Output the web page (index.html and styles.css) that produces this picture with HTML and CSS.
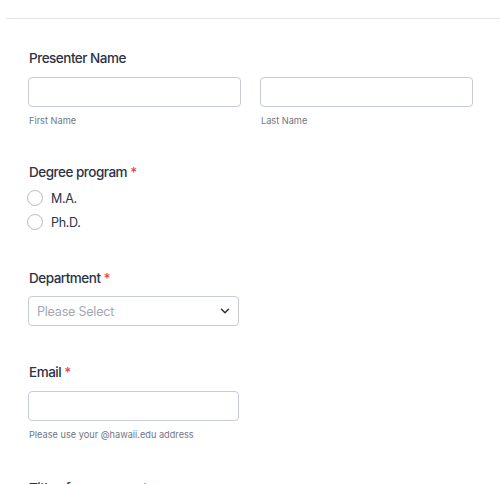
FILE: index.html
```html
<!DOCTYPE html>
<html lang="en">
<head>
    <meta charset="UTF-8">
    <meta name="viewport" content="width=device-width, initial-scale=1.0">
    <title>Presenter Registration</title>
    <link rel="stylesheet" href="styles.css">
</head>
<body>
    <div class="top-line"></div>
    <form class="form">
        <div class="form-line">
            <label class="form-label">Presenter Name</label>
            <div class="name-row">
                <div class="name-field">
                    <input type="text" class="form-input">
                    <span class="sublabel">First Name</span>
                </div>
                <div class="name-field">
                    <input type="text" class="form-input">
                    <span class="sublabel">Last Name</span>
                </div>
            </div>
        </div>

        <div class="form-line">
            <label class="form-label">Degree program <span class="required">*</span></label>
            <div class="radio-list">
                <label class="radio-item"><span class="radio"></span>M.A.</label>
                <label class="radio-item"><span class="radio"></span>Ph.D.</label>
            </div>
        </div>

        <div class="form-line wide-gap">
            <label class="form-label">Department <span class="required">*</span></label>
            <div class="select-box">
                <span class="placeholder">Please Select</span>
                <svg class="chevron" width="10" height="6" viewBox="0 0 10 6">
                    <path d="M1.5 1.2l3.5 3.5 3.5-3.5" fill="none" stroke="#2c3345" stroke-width="1.5" stroke-linecap="round" stroke-linejoin="round"/>
                </svg>
            </div>
        </div>

        <div class="form-line wide-gap">
            <label class="form-label">Email <span class="required">*</span></label>
            <input type="email" class="form-input short">
            <span class="sublabel helper">Please use your @hawaii.edu address</span>
        </div>

        <div class="form-line">
            <label class="form-label">Title of your paper <span class="required">*</span></label>
        </div>
    </form>
</body>
</html>
```

FILE: styles.css
```css
body {
    margin: 0;
    background: #fff;
    font-family: Inter, "Noto Sans", sans-serif;
    color: #2c3345;
}

.top-line {
    margin-left: 6px;
    margin-top: 18px;
    height: 1px;
    background: #e3e5ea;
}

.form {
    padding: 29px 0 0 28px;
}

.form-line {
    margin-bottom: 34px;
}

.form-line.wide-gap {
    margin-bottom: 36px;
}

.form-label {
    display: block;
    padding-left: 1px;
    font-size: 13.5px;
    line-height: 20px;
    font-weight: 500;
    letter-spacing: -0.5px;
    color: #2c3345;
}

.required {
    color: #f23a3c;
}

.name-row {
    display: flex;
    gap: 19px;
    margin-top: 9px;
}

.name-field {
    width: 213px;
    display: flex;
    flex-direction: column;
}

.form-input {
    box-sizing: border-box;
    width: 100%;
    height: 30px;
    margin: 0;
    border: 1px solid #c8cbd9;
    border-radius: 4px;
    background: #fff;
}

.form-input.short {
    display: block;
    width: 211px;
    margin-top: 9px;
}

.sublabel {
    display: block;
    margin-top: 7px;
    padding-left: 1px;
    font-size: 9.2px;
    line-height: 14px;
    color: #6f7687;
}

.radio-list {
    margin-top: 4px;
}

.radio-item {
    display: flex;
    align-items: center;
    height: 24px;
    font-size: 12.5px;
    letter-spacing: -0.3px;
    color: #2c3345;
}

.radio {
    box-sizing: border-box;
    width: 16px;
    height: 16px;
    margin-left: -1px;
    margin-right: 8px;
    border: 1px solid #b8bdc9;
    border-radius: 50%;
}

.select-box {
    box-sizing: border-box;
    display: flex;
    align-items: center;
    justify-content: space-between;
    width: 211px;
    height: 30px;
    margin-top: 8px;
    padding: 0 8px;
    border: 1px solid #c8cbd9;
    border-radius: 4px;
}

.placeholder {
    font-size: 12.5px;
    letter-spacing: -0.2px;
    color: #a3a8b4;
}
```
